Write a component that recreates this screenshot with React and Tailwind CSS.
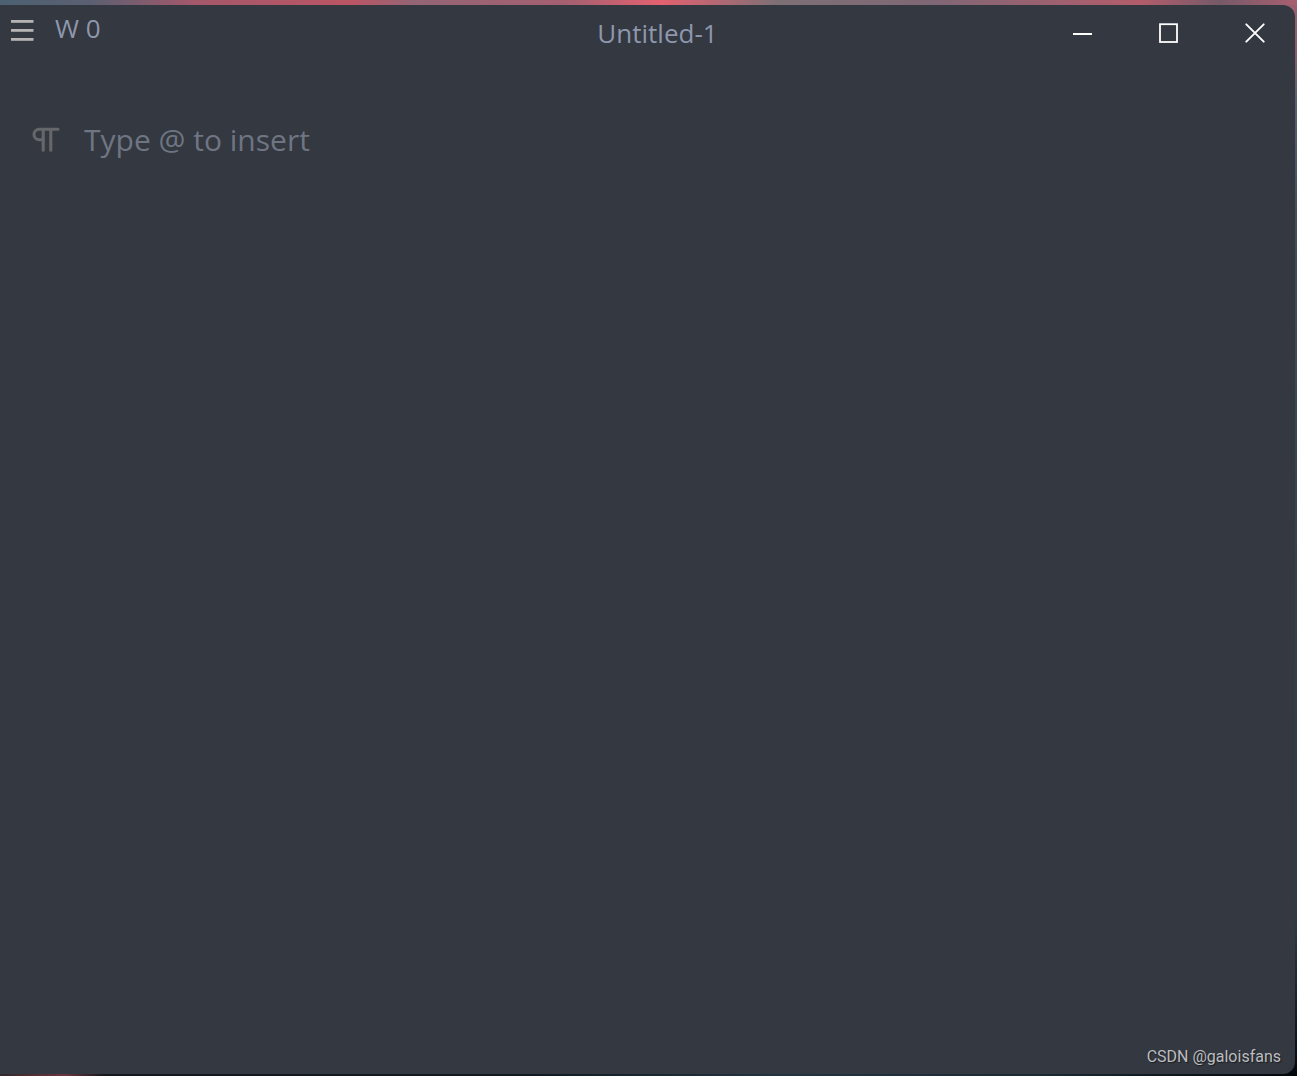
function MenuIcon() {
  return (
    <svg width="24" height="24" viewBox="0 0 24 24" fill="#b5b3b3" aria-hidden="true">
      <rect x="0" y="1" width="22.5" height="2.8" />
      <rect x="0" y="10" width="22.5" height="2.8" />
      <rect x="0" y="19" width="22.5" height="2.8" />
    </svg>
  );
}

function PilcrowIcon() {
  return (
    <svg
      width="28"
      height="26"
      viewBox="0 0 28 26"
      fill="none"
      stroke="#65676a"
      strokeWidth="3.1"
      strokeLinecap="round"
      strokeLinejoin="round"
      aria-hidden="true"
    >
      <path d="M26 2.3H7.2a5 5 0 0 0 0 10.4H11.2" />
      <path d="M11.2 2.5V23.2M18.8 2.5V23.2" />
    </svg>
  );
}

function WindowControls() {
  const button = "grid h-14 w-20 place-items-center";
  return (
    <div className="flex gap-1.5">
      <button type="button" aria-label="Minimize" className={button}>
        <svg width="20" height="20" viewBox="0 0 20 20" aria-hidden="true">
          <rect x="0" y="10" width="19" height="2" fill="#fff" />
        </svg>
      </button>
      <button type="button" aria-label="Maximize" className={button}>
        <svg width="20" height="20" viewBox="0 0 20 20" aria-hidden="true">
          <rect x="1" y="1.2" width="17" height="17.8" fill="none" stroke="#fff" strokeWidth="1.8" />
        </svg>
      </button>
      <button type="button" aria-label="Close" className={button}>
        <svg width="20" height="20" viewBox="0 0 20 20" aria-hidden="true">
          <path d="M1.3 1.3L18.7 18.7M18.7 1.3L1.3 18.7" stroke="#fff" strokeWidth="1.9" strokeLinecap="round" />
        </svg>
      </button>
    </div>
  );
}

export default function App() {
  return (
    <div className="flex min-h-screen flex-col bg-[linear-gradient(to_bottom,#9c5f70_0%,#8b5a6a_5%,#566273_9%,#3f505c_20%,#344854_40%,#2f3f4b_60%,#2c3d4a_85%,#0b1420_97%,#03070c_100%)] pr-0.5 font-['Open_Sans','Noto_Sans',sans-serif]">
      <div className="-mr-0.5 h-[5px] bg-[linear-gradient(to_right,#4b6172_0%,#5b6071_7%,#a4586a_15%,#bb5564_27%,#936575_32%,#a66070_44%,#e46170_51%,#7d7075_60%,#806775_72%,#b35c6b_88%,#765a68_94%,#a95f70_100%)]" />
      <div className="flex flex-1 flex-col rounded-r-xl bg-[#343840]">
        <header className="grid grid-cols-[1fr_auto_1fr] items-center">
          <div className="flex items-center gap-5 pb-2.5 pl-[11px]">
            <button type="button" aria-label="Menu" className="pt-1.5">
              <MenuIcon />
            </button>
            <span className="text-[26px] leading-8 text-[#8e97ad]">W 0</span>
          </div>
          <h1 className="pl-5 text-[26px] leading-8 text-[#8e97ad]">Untitled-1</h1>
          <div className="flex justify-end">
            <WindowControls />
          </div>
        </header>
        <main className="flex flex-1 flex-col px-8 pt-[59px]">
          <div className="flex items-center gap-6">
            <PilcrowIcon />
            <input
              type="text"
              aria-label="Document text"
              placeholder="Type @ to insert"
              className="min-w-0 flex-1 bg-transparent text-[30px] leading-10 text-[#8e97ad] outline-none placeholder:text-[#6f7583]"
            />
          </div>
        </main>
        <footer className="flex justify-end pr-3.5 pb-[5px] font-[Roboto,sans-serif] text-base leading-6 text-[#bbbdc0] [text-shadow:1px_1px_1px_#00000080]">
          CSDN @galoisfans
        </footer>
      </div>
      <div className="-mr-0.5 h-0.5 bg-[linear-gradient(to_right,#30292c_0%,#6b343e_5%,#14181d_8%,#101820_40%,#23343f_60%,#1c2933_80%,#03070c_100%)]" />
    </div>
  );
}
